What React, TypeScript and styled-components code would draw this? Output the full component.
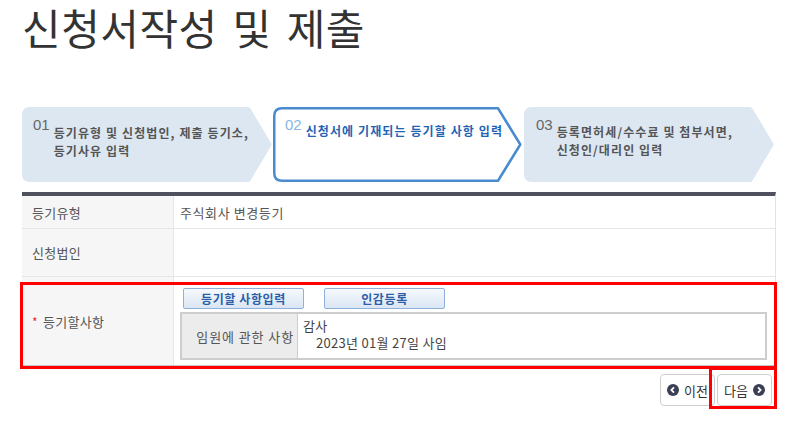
import React from "react";
import styled, { createGlobalStyle } from "styled-components";

const Global = createGlobalStyle`
  html, body { margin: 0; padding: 0; background: #fff; }
  body { font-family: "Noto Sans CJK KR", "Noto Sans", sans-serif; color: #333; }
`;

const Page = styled.div`
  position: relative;
  display: flex;
  flex-direction: column;
  width: 800px;
  height: 421px;
  padding: 0 24px 0 22px;
  box-sizing: border-box;
  overflow: hidden;
`;

const Title = styled.h1`
  margin: -4px 0 50px 0;
  font-size: 42px;
  line-height: 61px;
  font-weight: 400;
  color: #333;
  letter-spacing: 0.5px;
  word-spacing: 5px;
  white-space: nowrap;
`;

const Steps = styled.div`
  display: flex;
  gap: 1px;
  height: 75px;
  flex: none;
`;

const Step = styled.div`
  position: relative;
  width: 250px;
  height: 75px;
  flex: none;
`;

const StepShape = styled.svg`
  position: absolute;
  left: 0;
  top: 0;
`;

const StepBody = styled.div<{ $pl: number }>`
  position: relative;
  display: flex;
  align-items: flex-start;
  gap: 4px;
  padding: 10px 0 0 ${(p) => p.$pl}px;
`;

const StepNum = styled.span<{ $active?: boolean }>`
  font-family: "Liberation Sans", Arial, sans-serif;
  font-size: 15px;
  line-height: 15px;
  color: ${(p) => (p.$active ? "#8ab6e2" : "#666")};
`;

const StepText = styled.div<{ $active?: boolean; $mt: number }>`
  margin-top: ${(p) => p.$mt}px;
  font-size: 12px;
  line-height: 18px;
  font-weight: 700;
  letter-spacing: 1.1px;
  white-space: nowrap;
  color: ${(p) => (p.$active ? "#1e64b4" : "#555")};
`;

const Table = styled.div`
  margin-top: 10px;
  border-top: 4px solid #4f525e;
  border-right: 1px solid #e3e3e3;
  border-bottom: 2px solid #c4c4c4;
`;

const Row = styled.div<{ $h: number }>`
  display: flex;
  min-height: ${(p) => p.$h}px;
  border-bottom: 1px solid #e6e6e6;
  &:last-child { border-bottom: none; }
`;

const Label = styled.div`
  width: 152px;
  flex: none;
  box-sizing: border-box;
  display: flex;
  align-items: center;
  padding-left: 10px;
  background: #f6f6f6;
  border-right: 1px solid #e6e6e6;
  font-size: 13px;
  color: #555;
  letter-spacing: 0.3px;
`;

const Req = styled.span`
  color: #e03030;
  margin-right: 5px;
  font-size: 12px;
`;

const Value = styled.div`
  flex: 1;
  display: flex;
  align-items: center;
  padding-left: 6px;
  font-size: 13px;
  color: #555;
  letter-spacing: 0.6px;
`;

const ValueBlock = styled.div`
  flex: 1;
  padding: 11px 8px 5px 6px;
`;

const BtnRow = styled.div`
  display: flex;
  gap: 20px;
  margin-left: 3px;
`;

const BlueBtn = styled.button`
  width: 121px;
  height: 21px;
  padding: 0;
  border: 1px solid #8fb0da;
  border-radius: 2px;
  background: linear-gradient(#f6f9fd, #dae6f4);
  font-family: "Noto Sans CJK KR", sans-serif;
  font-size: 12px;
  font-weight: 700;
  color: #2b5ea8;
  line-height: 19px;
  letter-spacing: 0.6px;
`;

const Inner = styled.div`
  display: flex;
  margin-top: 3px;
  height: 48px;
  border: 2px solid #cdcdcd;
  box-sizing: border-box;
`;

const InnerLabel = styled.div`
  width: 116px;
  flex: none;
  display: flex;
  align-items: center;
  justify-content: flex-end;
  padding-right: 3px;
  box-sizing: border-box;
  background: #ececec;
  border-right: 1px solid #cdcdcd;
  font-size: 13px;
  color: #555;
  letter-spacing: 0.9px;
`;

const InnerValue = styled.div`
  flex: 1;
  padding: 3px 0 0 5px;
  font-size: 13px;
  line-height: 17px;
  color: #444;
  letter-spacing: 0.3px;
`;

const Indent = styled.div`
  padding-left: 13px;
`;

const Footer = styled.div`
  display: flex;
  justify-content: flex-end;
  gap: 2px;
  margin-top: 7px;
  padding-right: 4px;
`;

const NavBtn = styled.button`
  width: 55px;
  height: 32px;
  display: flex;
  align-items: center;
  justify-content: center;
  gap: 5px;
  padding: 0;
  background: #fff;
  border: 1px solid #cfcfcf;
  border-radius: 4px;
  font-family: "Noto Sans CJK KR", sans-serif;
  font-size: 13px;
  color: #333;
`;

const RedBox = styled.div<{ $l: number; $t: number; $w: number; $h: number }>`
  position: absolute;
  left: ${(p) => p.$l}px;
  top: ${(p) => p.$t}px;
  width: ${(p) => p.$w}px;
  height: ${(p) => p.$h}px;
  border: 3px solid #ff0000;
  box-sizing: border-box;
  pointer-events: none;
`;

const shapePath =
  "M8,0 H226 Q227.5,0 228.5,1.5 L249,36 Q250,37.5 249,39 L228.5,73.5 Q227.5,75 226,75 H8 Q0,75 0,67 V8 Q0,0 8,0 Z";
const outlinePath =
  "M9,1.25 H225 L247.3,37.5 L225,73.75 H9 Q1.25,73.75 1.25,66 V9 Q1.25,1.25 9,1.25 Z";

const Circle = ({ dir }: { dir: "l" | "r" }) => (
  <svg width="12" height="12" viewBox="0 0 12 12">
    <circle cx="6" cy="6" r="6" fill="#3b3f55" />
    <path
      d={dir === "l" ? "M7,3.3 L4.4,6 L7,8.7" : "M5,3.3 L7.6,6 L5,8.7"}
      fill="none"
      stroke="#fff"
      strokeWidth="1.8"
    />
  </svg>
);

export default function App() {
  return (
    <>
      <Global />
      <Page>
        <Title>신청서작성 및 제출</Title>
        <Steps>
          <Step>
            <StepShape width="250" height="75" viewBox="0 0 250 75">
              <path d={shapePath} fill="#dce7f2" />
            </StepShape>
            <StepBody $pl={11}>
              <StepNum>01</StepNum>
              <StepText $mt={7}>
                등기유형 및 신청법인, 제출 등기소,
                <br />
                등기사유 입력
              </StepText>
            </StepBody>
          </Step>
          <Step>
            <StepShape width="250" height="75" viewBox="0 0 250 75">
              <path d={outlinePath} fill="#fff" stroke="#4a8bd0" strokeWidth="2.5" strokeLinejoin="round" />
            </StepShape>
            <StepBody $pl={12}>
              <StepNum $active>02</StepNum>
              <StepText $active $mt={5}>
                신청서에 기재되는 등기할 사항 입력
              </StepText>
            </StepBody>
          </Step>
          <Step>
            <StepShape width="250" height="75" viewBox="0 0 250 75">
              <path d={shapePath} fill="#dce7f2" />
            </StepShape>
            <StepBody $pl={12}>
              <StepNum>03</StepNum>
              <StepText $mt={6}>
                등록면허세/수수료 및 첨부서면,
                <br />
                신청인/대리인 입력
              </StepText>
            </StepBody>
          </Step>
        </Steps>

        <Table>
          <Row $h={32}>
            <Label>등기유형</Label>
            <Value>주식회사 변경등기</Value>
          </Row>
          <Row $h={47}>
            <Label>신청법인</Label>
            <Value />
          </Row>
          <Row $h={88}>
            <Label>
              <Req>*</Req>등기할사항
            </Label>
            <ValueBlock>
              <BtnRow>
                <BlueBtn>등기할 사항입력</BlueBtn>
                <BlueBtn>인감등록</BlueBtn>
              </BtnRow>
              <Inner>
                <InnerLabel>임원에 관한 사항</InnerLabel>
                <InnerValue>
                  감사
                  <Indent>2023년 01월 27일 사임</Indent>
                </InnerValue>
              </Inner>
            </ValueBlock>
          </Row>
        </Table>

        <Footer>
          <NavBtn>
            <Circle dir="l" />
            이전
          </NavBtn>
          <NavBtn>
            다음
            <Circle dir="r" />
          </NavBtn>
        </Footer>

        <RedBox $l={20} $t={282} $w={757} $h={87} />
        <RedBox $l={709} $t={367} $w={68} $h={42} />
      </Page>
    </>
  );
}
